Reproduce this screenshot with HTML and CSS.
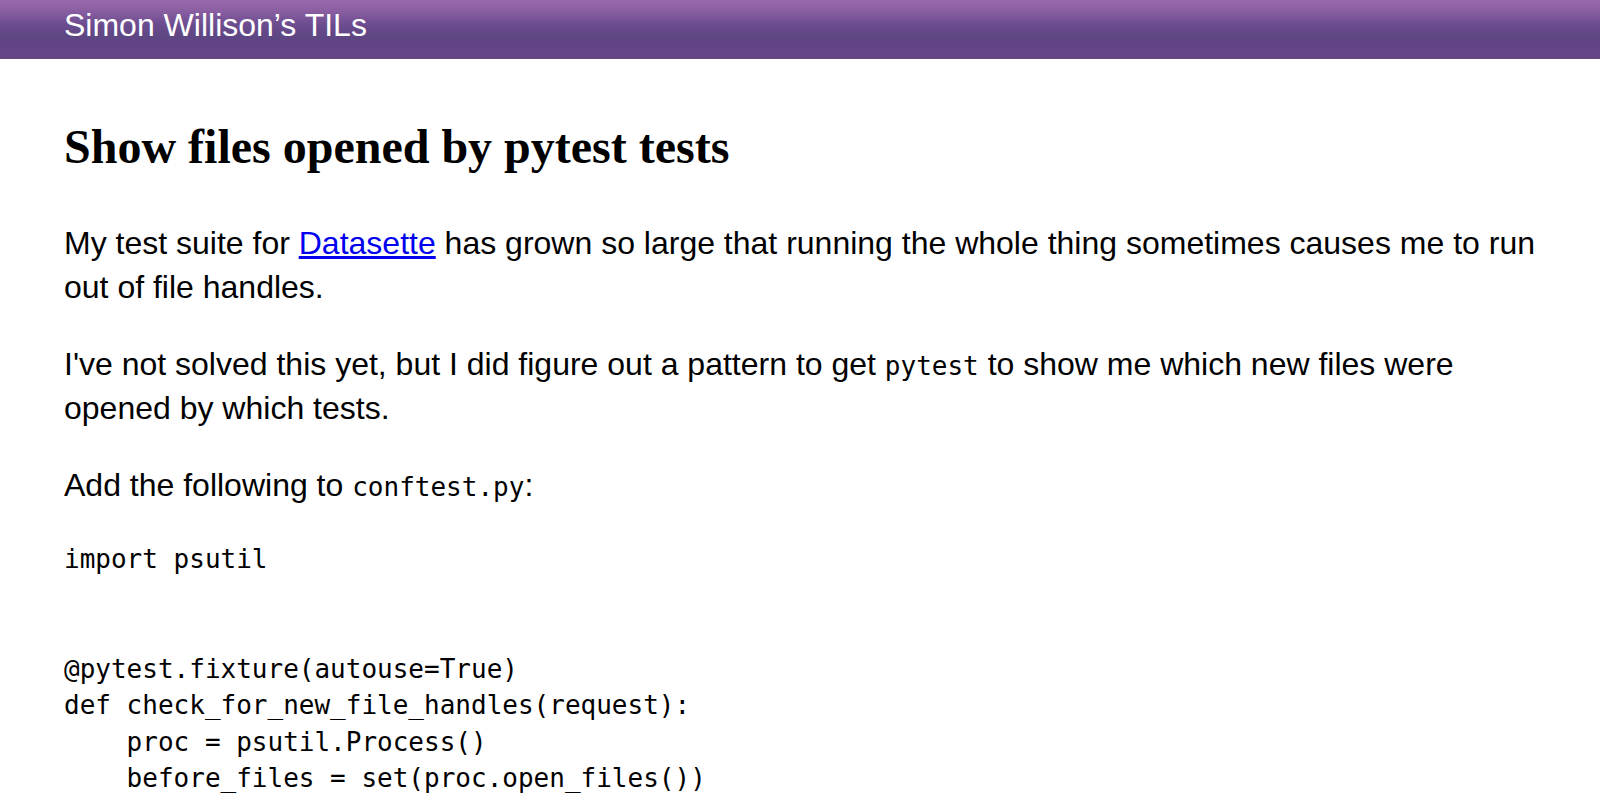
FILE: index.html
```html
<!DOCTYPE html>
<html lang="en">
<head>
<meta charset="utf-8">
<title>Show files opened by pytest tests | Simon Willison’s TILs</title>
<link rel="stylesheet" href="styles.css">
</head>
<body>
<header class="site-header">
  <div class="site-title">Simon Willison’s TILs</div>
</header>
<main class="content">
  <h1 class="post-title">Show files opened by pytest tests</h1>
  <p class="para">My test suite for <a class="link" href="#">Datasette</a> has grown so large that running the whole thing sometimes causes me to run out of file handles.</p>
  <p class="para">I've not solved this yet, but I did figure out a pattern to get <code class="inline-code">pytest</code> to show me which new files were opened by which tests.</p>
  <p class="para">Add the following to <code class="inline-code">conftest.py</code>:</p>
<pre class="code-block"><code>import psutil


@pytest.fixture(autouse=True)
def check_for_new_file_handles(request):
    proc = psutil.Process()
    before_files = set(proc.open_files())
    yield
    after_files = set(proc.open_files())
    new_files = after_files - before_files
    if new_files:
        print("{} opened files: {}".format(request.node.nodeid, new_files))</code></pre>
</main>
</body>
</html>
```
FILE: styles.css
```css
html, body {
  margin: 0;
  padding: 0;
  background: #ffffff;
}

body {
  font-family: "Liberation Sans", Arial, Helvetica, sans-serif;
  font-size: 32px;
  line-height: 44px;
  color: #000000;
}

.site-header {
  height: 59px;
  box-sizing: border-box;
  padding: 5px 64px 0 64px;
  background: linear-gradient(to bottom,
    #9a69ad 0%,
    #8a5fa2 18%,
    #6b4c8e 42%,
    #5e4683 62%,
    #634485 82%,
    #664484 100%);
}

.site-title {
  color: #ffffff;
  font-size: 32px;
  line-height: 41.6px;
}

.content {
  padding: 0 64px;
}

.post-title {
  font-family: "Liberation Serif", "Times New Roman", serif;
  font-weight: bold;
  font-size: 48px;
  line-height: 1.2;
  margin: 59px 0 45.5px 0;
}

.para {
  margin: 33px 0 0 0;
}

.link {
  color: #0000ee;
  text-decoration: underline;
}

.inline-code {
  font-family: "DejaVu Sans Mono", monospace;
  font-size: 26px;
  line-height: 1;
}

.code-block {
  margin: 34px 0 0 0;
  font-family: "DejaVu Sans Mono", monospace;
  font-size: 26px;
  line-height: 36.5px;
}

.code-block code {
  font-family: inherit;
  font-size: inherit;
}
```
